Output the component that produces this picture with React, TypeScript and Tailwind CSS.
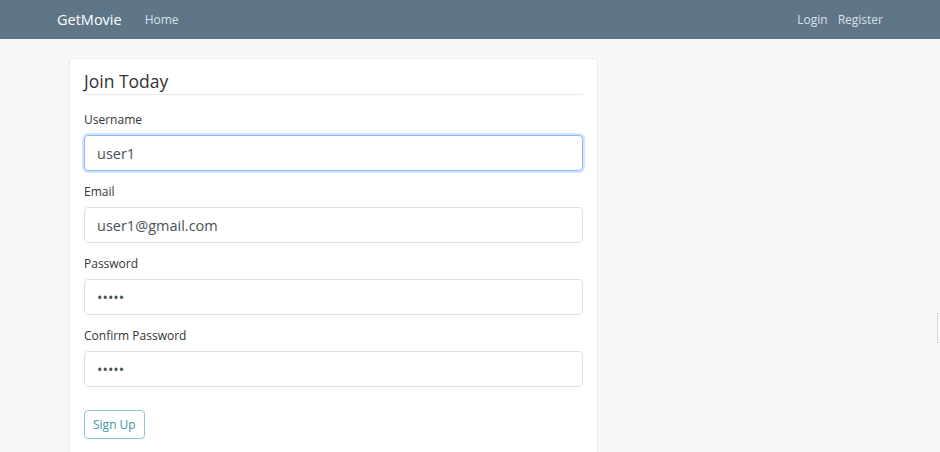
import React from "react";

const fields = [
  { label: "Username", value: "user1", type: "text", focus: true },
  { label: "Email", value: "user1@gmail.com", type: "text", focus: false },
  { label: "Password", value: "12345", type: "password", focus: false },
  { label: "Confirm Password", value: "12345", type: "password", focus: false },
];

export default function App() {
  return (
    <div className="relative min-h-[452px] bg-[#f8f8f8] font-['Open_Sans','Noto_Sans',sans-serif] text-[#212529]">
      <nav className="flex h-[39px] items-center bg-[#5f7588] px-[57px] pt-[1px]">
        <span className="text-[14.5px] text-white">GetMovie</span>
        <span className="ml-[23px] text-[12px] text-[#d9e0e6]">Home</span>
        <div className="ml-auto flex gap-[10px] text-[12px] text-[#d9e0e6]">
          <span>Login</span>
          <span>Register</span>
        </div>
      </nav>

      <div className="ml-[69px] mt-[19px] w-[529px] rounded-[3px] border border-[#ebebeb] bg-white px-[14px] pt-[10px] pb-[20px]">
        <h1 className="border-b border-[#eaeaea] pb-[1px] text-[17.5px] leading-[24px] text-[#333]">Join Today</h1>
        <div className="mt-[16px] flex flex-col gap-[12px]">
          {fields.map((f) => (
            <div key={f.label} className="flex flex-col">
              <label className="text-[12px] leading-[17px] text-[#333]">{f.label}</label>
              <input
                readOnly
                type={f.type}
                value={f.value}
                className={
                  f.focus
                    ? "mt-[7px] h-[36px] rounded-[4px] border border-[#86b7fe] px-[12px] text-[14.5px] text-[#495057] shadow-[0_0_0_2px_rgba(13,110,253,0.18)] outline-none"
                    : "mt-[7px] h-[36px] rounded-[4px] border border-[#dedede] px-[12px] text-[14.5px] text-[#495057] outline-none"
                }
              />
            </div>
          ))}
        </div>
        <button className="mt-[23px] h-[29px] rounded-[4px] border border-[#8cc7d3] px-[8px] text-[12px] text-[#3d97ab]">
          Sign Up
        </button>
      </div>

      <div className="absolute right-0 top-[313px] h-[30px] w-[3px] rounded-l-[2px] border border-r-0 border-[#d8d8d8]" />
    </div>
  );
}
